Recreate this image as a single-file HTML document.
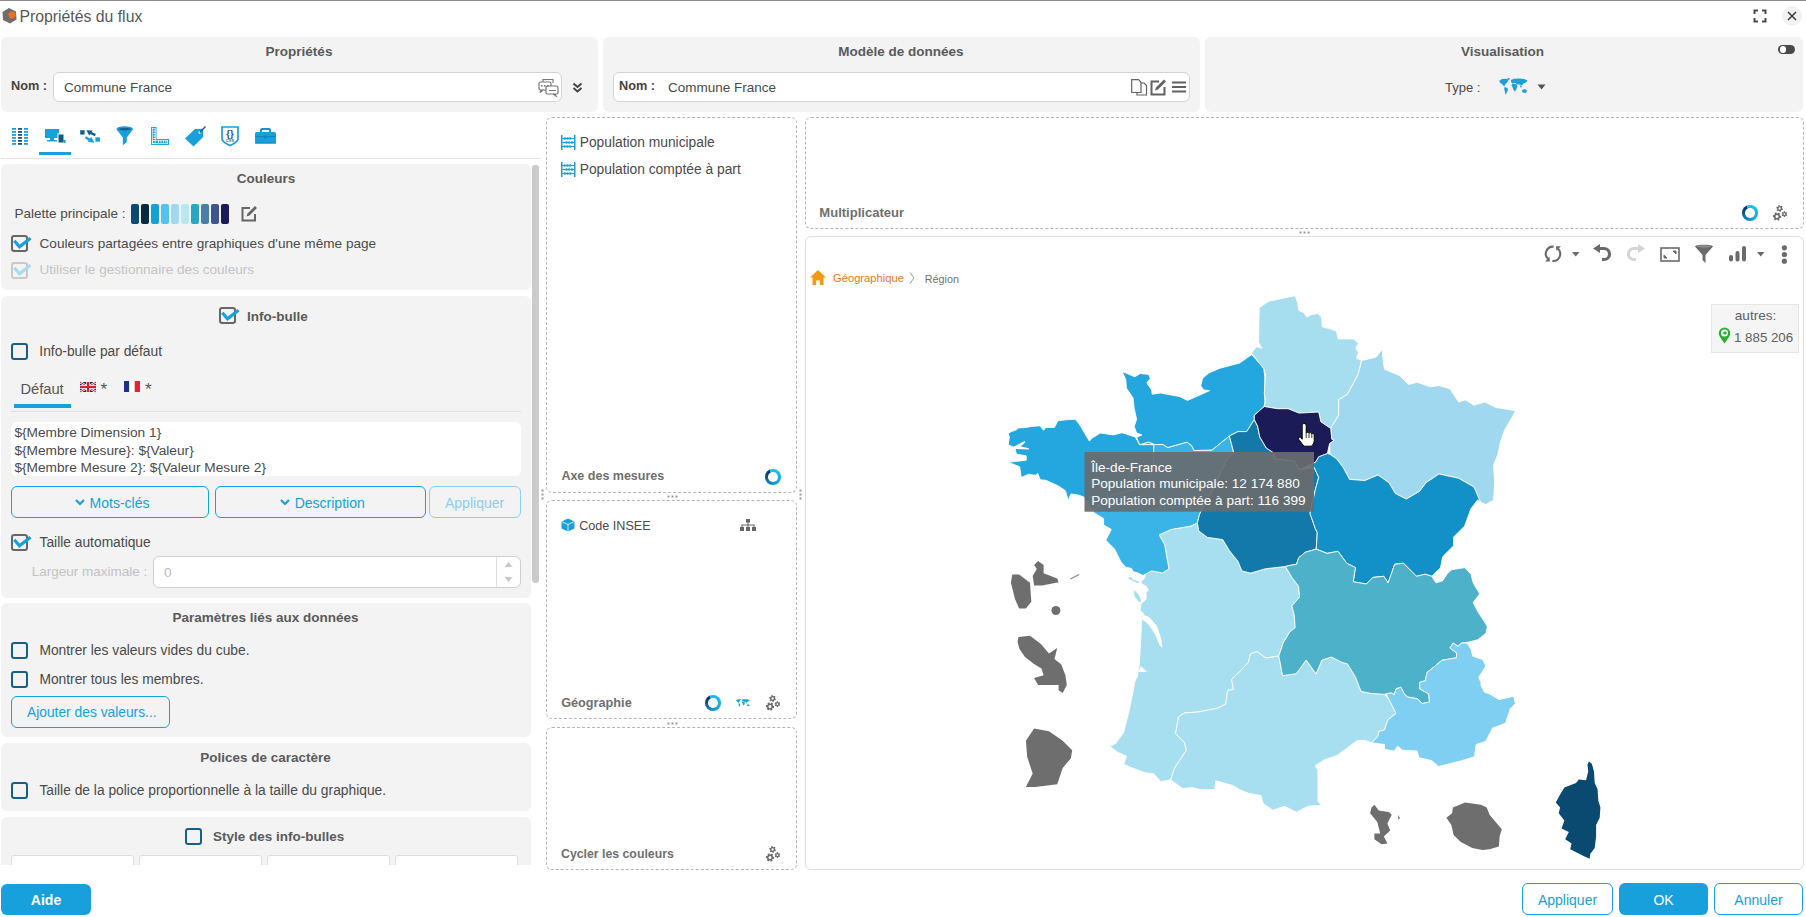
<!DOCTYPE html>
<html><head><meta charset="utf-8"><title>Propriétés du flux</title>
<style>
html,body{margin:0;padding:0;background:#fff;width:1806px;height:917px;overflow:hidden;position:relative}
.t{position:absolute;white-space:nowrap;line-height:1;font-family:"Liberation Sans",sans-serif}
.b{position:absolute}
svg.b{overflow:visible}
</style></head><body>
<div class="b" style="left:0px;top:0px;width:1806px;height:1px;background:#8c8c8c"></div>
<svg class="b" style="left:1px;top:7px" width="18" height="18" viewBox="0 0 18 18"><path d="M8 1 L15 4.5 L15.5 12.5 L9 16.5 L2 13 L1.5 5 Z" fill="#6d6d6d"/><circle cx="11" cy="8" r="3.6" fill="#f07020"/></svg>
<div class="t" style="left:19.4px;top:9.03px;font-size:15.8px;color:#585858;font-weight:normal;">Propriétés du flux</div>
<svg class="b" style="left:1753px;top:9px" width="14" height="14" viewBox="0 0 14 14"><path d="M1.5 5V1.5H5M9 1.5H12.5V5M12.5 9V12.5H9M5 12.5H1.5V9" fill="none" stroke="#4a4a4a" stroke-width="2"/></svg>
<div class="b" style="left:1782px;top:6px;width:20px;height:20px;background:#f2f2f2;border-radius:50%"></div>
<svg class="b" style="left:1787px;top:11px" width="10" height="10" viewBox="0 0 10 10"><path d="M1 1L9 9M9 1L1 9" stroke="#3a3a3a" stroke-width="1.5"/></svg>
<div class="b" style="left:1px;top:37px;width:597px;height:75px;background:#f3f3f3;border-radius:6px"></div>
<div class="b" style="left:603px;top:37px;width:597px;height:75px;background:#f3f3f3;border-radius:6px"></div>
<div class="b" style="left:1205px;top:37px;width:598px;height:75px;background:#f3f3f3;border-radius:6px"></div>
<div class="t" style="left:-1px;width:600px;text-align:center;top:44.57px;font-size:13.5px;color:#5a5a5a;font-weight:bold;">Propriétés</div>
<div class="t" style="left:601px;width:600px;text-align:center;top:44.57px;font-size:13.5px;color:#5a5a5a;font-weight:bold;">Modèle de données</div>
<div class="t" style="left:1202.5px;width:600px;text-align:center;top:44.97px;font-size:13.5px;color:#5a5a5a;font-weight:bold;">Visualisation</div>
<div class="t" style="left:11px;top:80.25px;font-size:12.7px;color:#444;font-weight:bold;">Nom :</div>
<div class="b" style="left:53px;top:72px;width:509px;height:30px;background:#fff;border:1px solid #cfd3d8;border-radius:6px;box-sizing:border-box"></div>
<div class="t" style="left:64px;top:80.87px;font-size:13.5px;color:#4a4a4a;font-weight:normal;">Commune France</div>
<svg class="b" style="left:538px;top:78px" width="22" height="18" viewBox="0 0 22 18"><g fill="none" stroke="#777" stroke-width="1.2"><rect x="1" y="4" width="12" height="8" rx="1.5"/><path d="M3 12l-1 2.5 3-2.5"/><path d="M5 4V1.5h10V5"/><rect x="8" y="8" width="12" height="8" rx="1.5" fill="#fff"/><path d="M17 16l1 2 -3-2"/></g><g fill="#777"><rect x="3" y="7" width="1.6" height="1.6"/><rect x="6" y="7" width="1.6" height="1.6"/><rect x="9" y="7" width="1.6" height="1.6"/><rect x="11" y="12" width="7" height="1"/></g></svg>
<svg class="b" style="left:572px;top:82px" width="11" height="11" viewBox="0 0 11 11"><path d="M1.5 1.5L5.5 5L9.5 1.5M1.5 6L5.5 9.5L9.5 6" fill="none" stroke="#444" stroke-width="2"/></svg>
<div class="b" style="left:613px;top:72px;width:577px;height:30px;background:#fff;border:1px solid #cfd3d8;border-radius:6px;box-sizing:border-box"></div>
<div class="t" style="left:619px;top:80.25px;font-size:12.7px;color:#444;font-weight:bold;">Nom :</div>
<div class="t" style="left:668px;top:80.87px;font-size:13.5px;color:#4a4a4a;font-weight:normal;">Commune France</div>
<svg class="b" style="left:1131px;top:79px" width="17" height="17" viewBox="0 0 17 17"><path d="M0.7 0.7H7.5L10 3.2V13.5H0.7Z" fill="none" stroke="#626262" stroke-width="1.2"/><path d="M6 13.5V16H15.5V6.5L13 4H10" fill="none" stroke="#626262" stroke-width="1.2"/></svg>
<svg class="b" style="left:1150px;top:78px" width="17" height="18" viewBox="0 0 17 18"><path d="M9 3.5H1.5V16.5H14.5V9" fill="none" stroke="#626262" stroke-width="2"/><path d="M14 1.5L16 3.5L8 11.5L5 12.5L6 9.5Z" fill="#626262"/></svg>
<svg class="b" style="left:1172px;top:81px" width="14" height="12" viewBox="0 0 14 12"><path d="M0 1.5H14M0 6H14M0 10.5H14" stroke="#626262" stroke-width="2"/></svg>
<div class="b" style="left:1778px;top:44.5px;width:17px;height:9.5px;background:#4a4a4a;border-radius:5px"></div>
<div class="b" style="left:1779.5px;top:46px;width:6.5px;height:6.5px;background:#fff;border-radius:50%"></div>
<div class="t" style="left:1445px;top:80.60px;font-size:13px;color:#4a4a4a;font-weight:normal;">Type :</div>
<svg class="b" style="left:1499px;top:78px" width="29" height="17" viewBox="0 0 29 17"><g fill="#1e9fd8"><path d="M0.5 2.5L3 1L7 0.8L9.5 1.5L9 3.5L7.5 5L6 7L5.2 8.5L3.5 6.5L1.5 5L0.5 4Z"/><path d="M8 0.3L11 0.3L10.5 1.8L8.8 1.8Z"/><path d="M5.5 9L8.5 10L9 12L7.5 15L6.5 17L6 14L5.2 11Z"/><path d="M12 2L15 0.8L20 0.5L25 1L28.5 2.5L27 4.5L24.5 5.5L23 7.5L20.5 6.5L18 6.5L16.5 5L13.5 5.5L12 4Z"/><path d="M13 6L17 6L18.5 8L17.5 11L16 13.5L14.5 12L13.5 9L12.5 7.5Z"/><path d="M20.5 7L23 8L22 10Z"/><path d="M23 12L26 11L28 12.5L27 15L23.5 14.5Z"/></g></svg>
<svg class="b" style="left:1537px;top:84px" width="9" height="6" viewBox="0 0 9 6"><path d="M0.5 0.5H8.5L4.5 5.5Z" fill="#555"/></svg>
<svg class="b" style="left:12px;top:128px" width="17" height="18" viewBox="0 0 17 18"><rect x="0" y="0" width="4" height="1.8" fill="#17a0db"/><rect x="6" y="0" width="4" height="1.8" fill="#16587e"/><rect x="12" y="0" width="4" height="1.8" fill="#17a0db"/><rect x="0" y="3" width="4" height="1.8" fill="#17a0db"/><rect x="6" y="3" width="4" height="1.8" fill="#16587e"/><rect x="12" y="3" width="4" height="1.8" fill="#17a0db"/><rect x="0" y="6" width="4" height="1.8" fill="#17a0db"/><rect x="6" y="6" width="4" height="1.8" fill="#16587e"/><rect x="12" y="6" width="4" height="1.8" fill="#17a0db"/><rect x="0" y="9" width="4" height="1.8" fill="#17a0db"/><rect x="6" y="9" width="4" height="1.8" fill="#16587e"/><rect x="12" y="9" width="4" height="1.8" fill="#17a0db"/><rect x="0" y="12" width="4" height="1.8" fill="#17a0db"/><rect x="6" y="12" width="4" height="1.8" fill="#16587e"/><rect x="12" y="12" width="4" height="1.8" fill="#17a0db"/><rect x="0" y="15" width="4" height="1.8" fill="#17a0db"/><rect x="6" y="15" width="4" height="1.8" fill="#16587e"/><rect x="12" y="15" width="4" height="1.8" fill="#17a0db"/></svg>
<svg class="b" style="left:45px;top:129px" width="21" height="14" viewBox="0 0 21 14"><rect x="0" y="0" width="14" height="9" fill="#17a0db"/><rect x="5" y="9" width="4" height="2" fill="#17a0db"/><rect x="2" y="11" width="10" height="1.5" fill="#17a0db"/><rect x="13" y="5" width="6" height="9" fill="#16587e" stroke="#fff" stroke-width="1"/><rect x="18.5" y="11" width="2" height="3" fill="#17a0db"/></svg>
<div class="b" style="left:39px;top:152px;width:32px;height:3px;background:#17a0db"></div>
<svg class="b" style="left:80px;top:129px" width="20" height="15" viewBox="0 0 20 15"><rect x="0.2" y="1.2" width="4.4" height="4.4" fill="#115f8c"/><path d="M10 3.6L15.4 6.2" stroke="#115f8c" stroke-width="2.4"/><path d="M6.4 1.2L12.6 1.4L9.2 6.5Z" fill="#115f8c"/><path d="M5.5 8.3L11 11.8" stroke="#17a0db" stroke-width="2.4"/><path d="M14.3 13.8L7.9 12.7L11.4 7.8Z" fill="#17a0db"/><rect x="15.4" y="8.3" width="4.5" height="4.4" fill="#17a0db"/></svg>
<svg class="b" style="left:116px;top:126px" width="18" height="20" viewBox="0 0 18 20"><ellipse cx="8.7" cy="3" rx="8.3" ry="2.8" fill="#17a0db"/><path d="M0.6 3.5L6.8 11.5L6.9 19.2L10.8 16L10.8 11.5L16.8 3.5Z" fill="#17a0db"/><ellipse cx="8.7" cy="3.2" rx="6" ry="1.2" fill="#115f8c"/></svg>
<svg class="b" style="left:151px;top:127px" width="18" height="18" viewBox="0 0 18 18"><path d="M0 0H5.5V12H18V18H0Z" fill="#17a0db"/><g fill="#fff"><rect x="1.3" y="1.3" width="2.9" height="15.4" fill="none" stroke="#fff" stroke-width="0.7"/><rect x="1.3" y="13.3" width="15.4" height="3.4" fill="none" stroke="#fff" stroke-width="0.7"/><rect x="2.5" y="3.5" width="2" height="1"/><rect x="2.5" y="6" width="2" height="1"/><rect x="2.5" y="8.5" width="2" height="1"/><rect x="2.5" y="11" width="2" height="1"/><rect x="7" y="13.5" width="1" height="2"/><rect x="9.5" y="13.5" width="1" height="2"/><rect x="12" y="13.5" width="1" height="2"/><rect x="14.5" y="13.5" width="1" height="2"/></g></svg>
<svg class="b" style="left:185px;top:126px" width="21" height="20" viewBox="0 0 21 20"><path d="M10 3L18 2.8L18.2 11L8.5 20.5L0 12.5Z" fill="#17a0db"/><circle cx="14.8" cy="6.5" r="1.4" fill="#cfeaf6"/><path d="M14.8 6.5L20.5 0.5" stroke="#16587e" stroke-width="1.3"/></svg>
<svg class="b" style="left:221px;top:126px" width="18" height="20" viewBox="0 0 18 20"><path d="M1 1H17V13C17 16 12 18 9 19.5C6 18 1 16 1 13Z" fill="#fff" stroke="#17a0db" stroke-width="1.7"/><text x="9" y="11" font-size="9.5" font-weight="bold" text-anchor="middle" fill="#16587e" font-family="Liberation Sans">{}</text><text x="9" y="16.3" font-size="5.5" text-anchor="middle" fill="#16587e" font-family="Liberation Sans">css</text></svg>
<svg class="b" style="left:255px;top:128px" width="21" height="16" viewBox="0 0 21 16"><path d="M6 4.5V2.2Q6 1 7.3 1H13.7Q15 1 15 2.2V4.5" fill="none" stroke="#1791c9" stroke-width="2"/><rect x="0" y="4" width="21" height="11.5" rx="1.5" fill="#17a0db"/><rect x="0" y="8" width="21" height="1" fill="#1586bd"/><rect x="0" y="14.5" width="21" height="1" fill="#1586bd"/><circle cx="10.5" cy="9" r="1.8" fill="#1586bd"/></svg>
<div class="b" style="left:1px;top:158px;width:540px;height:1px;background:#e4e4e4"></div>
<div class="b" style="left:1px;top:164px;width:530px;height:126px;background:#f3f3f3;border-radius:6px"></div>
<div class="b" style="left:1px;top:296px;width:530px;height:302px;background:#f3f3f3;border-radius:6px"></div>
<div class="b" style="left:1px;top:603px;width:530px;height:134px;background:#f3f3f3;border-radius:6px"></div>
<div class="b" style="left:1px;top:743px;width:530px;height:68px;background:#f3f3f3;border-radius:6px"></div>
<div class="b" style="left:1px;top:817px;width:530px;height:48px;overflow:hidden"><div style="position:absolute;left:0;top:0;width:530px;height:60px;background:#f3f3f3;border-radius:6px"></div></div>
<div class="b" style="left:532px;top:165px;width:6.5px;height:418px;background:#cbcbcb;border-radius:3px"></div>
<div class="t" style="left:-34px;width:600px;text-align:center;top:171.57px;font-size:13.5px;color:#5a5a5a;font-weight:bold;">Couleurs</div>
<div class="t" style="left:14.5px;top:207.17px;font-size:13.5px;color:#4a4a4a;font-weight:normal;">Palette principale :</div>
<div class="b" style="left:131px;top:204px;width:8px;height:20px;background:#0b4a72;border-radius:2px"></div>
<div class="b" style="left:141px;top:204px;width:8px;height:20px;background:#072a40;border-radius:2px"></div>
<div class="b" style="left:151px;top:204px;width:8px;height:20px;background:#14a0d8;border-radius:2px"></div>
<div class="b" style="left:161px;top:204px;width:8px;height:20px;background:#50c4ef;border-radius:2px"></div>
<div class="b" style="left:171px;top:204px;width:8px;height:20px;background:#9fd8ef;border-radius:2px"></div>
<div class="b" style="left:181px;top:204px;width:8px;height:20px;background:#b8e9f0;border-radius:2px"></div>
<div class="b" style="left:191px;top:204px;width:8px;height:20px;background:#2aa6c0;border-radius:2px"></div>
<div class="b" style="left:201px;top:204px;width:8px;height:20px;background:#4a7ea8;border-radius:2px"></div>
<div class="b" style="left:211px;top:204px;width:8px;height:20px;background:#3e5591;border-radius:2px"></div>
<div class="b" style="left:221px;top:204px;width:8px;height:20px;background:#1b1b5c;border-radius:2px"></div>
<svg class="b" style="left:241px;top:205px" width="17" height="17" viewBox="0 0 17 17"><path d="M9 3H1.5V15.5H14V9" fill="none" stroke="#666" stroke-width="2"/><path d="M14 1L16 3L8.5 10.5L5.5 11.5L6.5 8.5Z" fill="#666"/></svg>
<svg class="b" style="left:11px;top:235px" width="21" height="17" viewBox="0 0 21 17"><rect x="1" y="1" width="15" height="15" rx="2.2" fill="none" stroke="#666" stroke-width="2"/><path d="M3.3 5.8L8.5 11.8L19.5 3.2" fill="none" stroke="#17a0db" stroke-width="3.2"/></svg>
<div class="t" style="left:39.5px;top:237.09px;font-size:13.6px;color:#4a4a4a;font-weight:normal;">Couleurs partagées entre graphiques d'une même page</div>
<svg class="b" style="left:11px;top:261.5px" width="21" height="17" viewBox="0 0 21 17"><rect x="1" y="1" width="15" height="15" rx="2.2" fill="none" stroke="#c9c9c9" stroke-width="2"/><path d="M3.3 5.8L8.5 11.8L19.5 3.2" fill="none" stroke="#a9daf0" stroke-width="3.2"/></svg>
<div class="t" style="left:39.5px;top:263.29px;font-size:13.6px;color:#c4c4c4;font-weight:normal;">Utiliser le gestionnaire des couleurs</div>
<svg class="b" style="left:219px;top:307px" width="21" height="17" viewBox="0 0 21 17"><rect x="1" y="1" width="15" height="15" rx="2.2" fill="none" stroke="#666" stroke-width="2"/><path d="M3.3 5.8L8.5 11.8L19.5 3.2" fill="none" stroke="#17a0db" stroke-width="3.2"/></svg>
<div class="t" style="left:247px;top:309.57px;font-size:13.5px;color:#5a5a5a;font-weight:bold;">Info-bulle</div>
<svg class="b" style="left:11px;top:343px" width="17" height="17" viewBox="0 0 17 17"><rect x="1" y="1" width="15" height="15" rx="2.2" fill="none" stroke="#175f86" stroke-width="2"/></svg>
<div class="t" style="left:39.3px;top:345.32px;font-size:13.8px;color:#4a4a4a;font-weight:normal;">Info-bulle par défaut</div>
<div class="t" style="left:20.4px;top:382.16px;font-size:14.7px;color:#555;font-weight:normal;">Défaut</div>
<div class="b" style="left:14px;top:404px;width:57px;height:3.5px;background:#17a0db"></div>
<div class="b" style="left:11px;top:411px;width:510px;height:1px;background:#e0e0e0"></div>
<svg class="b" style="left:80px;top:382px" width="16" height="10" viewBox="0 0 16 10"><rect width="16" height="10" fill="#1d2b6b"/><path d="M0 0L16 10M16 0L0 10" stroke="#fff" stroke-width="2.4"/><path d="M0 0L16 10M16 0L0 10" stroke="#d22030" stroke-width="1"/><path d="M8 0V10M0 5H16" stroke="#fff" stroke-width="3.4"/><path d="M8 0V10M0 5H16" stroke="#d22030" stroke-width="2"/></svg>
<div class="t" style="left:100.5px;top:381.11px;font-size:17px;color:#555;font-weight:normal;">*</div>
<svg class="b" style="left:124px;top:381px" width="16" height="11" viewBox="0 0 16 11"><rect width="5.3" height="11" fill="#1f2d8c"/><rect x="5.3" width="5.4" height="11" fill="#fff"/><rect x="10.7" width="5.3" height="11" fill="#e0263a"/></svg>
<div class="t" style="left:145px;top:381.11px;font-size:17px;color:#555;font-weight:normal;">*</div>
<div class="b" style="left:11px;top:422px;width:510px;height:54px;background:#fff;border-radius:6px"></div>
<div class="t" style="left:14.4px;top:425.50px;font-size:13.7px;color:#4a4a4a;font-weight:normal;">${Membre Dimension 1}</div>
<div class="t" style="left:14.4px;top:443.50px;font-size:13.7px;color:#4a4a4a;font-weight:normal;">${Membre Mesure}: ${Valeur}</div>
<div class="t" style="left:14.4px;top:461.00px;font-size:13.7px;color:#4a4a4a;font-weight:normal;">${Membre Mesure 2}: ${Valeur Mesure 2}</div>
<div class="b" style="left:11px;top:486px;width:198px;height:32px;border:1.3px solid #17a0db;border-radius:6px;box-sizing:border-box"></div>
<div class="t" style="left:89.6px;top:495.65px;font-size:14px;color:#17a0db;font-weight:normal;">Mots-clés</div>
<svg class="b" style="left:75px;top:499px" width="10" height="7" viewBox="0 0 10 7"><path d="M1 1L5 5L9 1" fill="none" stroke="#17a0db" stroke-width="2.2"/></svg>
<div class="b" style="left:215px;top:486px;width:211px;height:32px;border:1.3px solid #17a0db;border-radius:6px;box-sizing:border-box"></div>
<div class="t" style="left:294.7px;top:495.65px;font-size:14px;color:#17a0db;font-weight:normal;">Description</div>
<svg class="b" style="left:280px;top:499px" width="10" height="7" viewBox="0 0 10 7"><path d="M1 1L5 5L9 1" fill="none" stroke="#17a0db" stroke-width="2.2"/></svg>
<div class="b" style="left:429px;top:486px;width:92px;height:32px;border:1.3px solid #8fcdea;border-radius:6px;box-sizing:border-box"></div>
<div class="t" style="left:445px;top:495.65px;font-size:14px;color:#8fcdea;font-weight:normal;">Appliquer</div>
<svg class="b" style="left:11px;top:534px" width="21" height="17" viewBox="0 0 21 17"><rect x="1" y="1" width="15" height="15" rx="2.2" fill="none" stroke="#666" stroke-width="2"/><path d="M3.3 5.8L8.5 11.8L19.5 3.2" fill="none" stroke="#17a0db" stroke-width="3.2"/></svg>
<div class="t" style="left:39.5px;top:535.82px;font-size:13.8px;color:#4a4a4a;font-weight:normal;">Taille automatique</div>
<div class="t" style="left:31.8px;top:565.07px;font-size:13.5px;color:#c2c2c2;font-weight:normal;">Largeur maximale :</div>
<div class="b" style="left:153px;top:556px;width:368px;height:32px;background:#fff;border:1px solid #cfcfcf;border-radius:6px;box-sizing:border-box"></div>
<div class="b" style="left:496px;top:557px;width:1px;height:30px;background:#ddd"></div>
<svg class="b" style="left:504px;top:561px" width="9" height="22" viewBox="0 0 9 22"><path d="M0.5 6H8.5L4.5 1Z" fill="#c8c8c8"/><path d="M0.5 16H8.5L4.5 21Z" fill="#c8c8c8"/></svg>
<div class="t" style="left:164px;top:566.37px;font-size:13.5px;color:#bbb;font-weight:normal;">0</div>
<div class="t" style="left:-34.5px;width:600px;text-align:center;top:610.57px;font-size:13.5px;color:#5a5a5a;font-weight:bold;">Paramètres liés aux données</div>
<svg class="b" style="left:11px;top:642px" width="17" height="17" viewBox="0 0 17 17"><rect x="1" y="1" width="15" height="15" rx="2.2" fill="none" stroke="#175f86" stroke-width="2"/></svg>
<div class="t" style="left:39.4px;top:644.12px;font-size:13.8px;color:#4a4a4a;font-weight:normal;">Montrer les valeurs vides du cube.</div>
<svg class="b" style="left:11px;top:671px" width="17" height="17" viewBox="0 0 17 17"><rect x="1" y="1" width="15" height="15" rx="2.2" fill="none" stroke="#175f86" stroke-width="2"/></svg>
<div class="t" style="left:39.4px;top:673.32px;font-size:13.8px;color:#4a4a4a;font-weight:normal;">Montrer tous les membres.</div>
<div class="b" style="left:11px;top:696px;width:159px;height:32px;border:1.3px solid #17a0db;border-radius:6px;box-sizing:border-box"></div>
<div class="t" style="left:27px;top:705.82px;font-size:13.8px;color:#17a0db;font-weight:normal;">Ajouter des valeurs...</div>
<div class="t" style="left:-34.5px;width:600px;text-align:center;top:750.57px;font-size:13.5px;color:#5a5a5a;font-weight:bold;">Polices de caractère</div>
<svg class="b" style="left:11px;top:782px" width="17" height="17" viewBox="0 0 17 17"><rect x="1" y="1" width="15" height="15" rx="2.2" fill="none" stroke="#175f86" stroke-width="2"/></svg>
<div class="t" style="left:39.4px;top:783.92px;font-size:13.8px;color:#4a4a4a;font-weight:normal;">Taille de la police proportionnelle à la taille du graphique.</div>
<svg class="b" style="left:185px;top:828px" width="17" height="17" viewBox="0 0 17 17"><rect x="1" y="1" width="15" height="15" rx="2.2" fill="none" stroke="#175f86" stroke-width="2"/></svg>
<div class="t" style="left:213px;top:829.57px;font-size:13.5px;color:#5a5a5a;font-weight:bold;">Style des info-bulles</div>
<div class="b" style="left:0;top:855px;width:531px;height:10px;overflow:hidden"><div style="position:absolute;left:11px;top:0;width:123px;height:30px;background:#fff;border:1px solid #ddd;border-radius:3px;box-sizing:border-box"></div><div style="position:absolute;left:139px;top:0;width:123px;height:30px;background:#fff;border:1px solid #ddd;border-radius:3px;box-sizing:border-box"></div><div style="position:absolute;left:267px;top:0;width:123px;height:30px;background:#fff;border:1px solid #ddd;border-radius:3px;box-sizing:border-box"></div><div style="position:absolute;left:395px;top:0;width:123px;height:30px;background:#fff;border:1px solid #ddd;border-radius:3px;box-sizing:border-box"></div></div>
<div class="b" style="left:1px;top:883.5px;width:90px;height:31.5px;background:#17a0db;border-radius:6px"></div>
<div class="t" style="left:-254px;width:600px;text-align:center;top:892.55px;font-size:14px;color:#fff;font-weight:bold;">Aide</div>
<div class="b" style="left:546px;top:117px;width:251px;height:376px;border:1px dashed #b4b4b4;border-radius:6px;box-sizing:border-box"></div>
<div class="b" style="left:546px;top:500px;width:251px;height:219px;border:1px dashed #b4b4b4;border-radius:6px;box-sizing:border-box"></div>
<div class="b" style="left:546px;top:726.5px;width:251px;height:143px;border:1px dashed #b4b4b4;border-radius:6px;box-sizing:border-box"></div>
<svg class="b" style="left:561px;top:134.5px" width="15" height="15" viewBox="0 0 15 15"><g fill="#17a0db"><rect x="0" y="0" width="1.5" height="15"/><rect x="13" y="0" width="1.5" height="15"/><rect x="1" y="3" width="12" height="1"/><rect x="1" y="7" width="12" height="1"/><rect x="1" y="11" width="12" height="1"/><circle cx="3.8" cy="3.5" r="1.3"/><circle cx="6.5" cy="3.5" r="1.3"/><circle cx="9.2" cy="3.5" r="1.3"/><circle cx="5.5" cy="7.5" r="1.3"/><circle cx="8.2" cy="7.5" r="1.3"/><circle cx="10.9" cy="7.5" r="1.3"/><circle cx="3.8" cy="11.5" r="1.3"/><circle cx="6.5" cy="11.5" r="1.3"/><circle cx="9.2" cy="11.5" r="1.3"/></g></svg>
<svg class="b" style="left:561px;top:161.5px" width="15" height="15" viewBox="0 0 15 15"><g fill="#17a0db"><rect x="0" y="0" width="1.5" height="15"/><rect x="13" y="0" width="1.5" height="15"/><rect x="1" y="3" width="12" height="1"/><rect x="1" y="7" width="12" height="1"/><rect x="1" y="11" width="12" height="1"/><circle cx="3.8" cy="3.5" r="1.3"/><circle cx="6.5" cy="3.5" r="1.3"/><circle cx="9.2" cy="3.5" r="1.3"/><circle cx="5.5" cy="7.5" r="1.3"/><circle cx="8.2" cy="7.5" r="1.3"/><circle cx="10.9" cy="7.5" r="1.3"/><circle cx="3.8" cy="11.5" r="1.3"/><circle cx="6.5" cy="11.5" r="1.3"/><circle cx="9.2" cy="11.5" r="1.3"/></g></svg>
<div class="t" style="left:579.7px;top:136.12px;font-size:13.8px;color:#4a4a4a;font-weight:normal;">Population municipale</div>
<div class="t" style="left:579.7px;top:163.12px;font-size:13.8px;color:#4a4a4a;font-weight:normal;">Population comptée à part</div>
<div class="t" style="left:561.4px;top:470.42px;font-size:12.5px;color:#6f6f6f;font-weight:bold;">Axe des mesures</div>
<div class="b" style="left:765.2px;top:469.2px;width:15.6px;height:15.6px;border-radius:50%;background:conic-gradient(from -25deg,#06c8f2 0deg,#18b4e8 120deg,#1597d2 200deg,#0c6ea8 270deg,#06386a 335deg)"><div style="position:absolute;left:3px;top:3px;width:9.6px;height:9.6px;border-radius:50%;background:#fff"></div></div>
<svg class="b" style="left:667px;top:495px" width="11" height="3" viewBox="0 0 11 3"><rect x="0.5" y="0.5" width="2" height="2" fill="#999"/><rect x="4.5" y="0.5" width="2" height="2" fill="#999"/><rect x="8.5" y="0.5" width="2" height="2" fill="#999"/></svg>
<svg class="b" style="left:667px;top:721.5px" width="11" height="3" viewBox="0 0 11 3"><rect x="0.5" y="0.5" width="2" height="2" fill="#999"/><rect x="4.5" y="0.5" width="2" height="2" fill="#999"/><rect x="8.5" y="0.5" width="2" height="2" fill="#999"/></svg>
<svg class="b" style="left:1299px;top:231px" width="11" height="3" viewBox="0 0 11 3"><rect x="0.5" y="0.5" width="2" height="2" fill="#999"/><rect x="4.5" y="0.5" width="2" height="2" fill="#999"/><rect x="8.5" y="0.5" width="2" height="2" fill="#999"/></svg>
<svg class="b" style="left:541px;top:489px" width="3" height="11" viewBox="0 0 3 11"><rect x="0.5" y="0.5" width="2" height="2" fill="#999"/><rect x="0.5" y="4.5" width="2" height="2" fill="#999"/><rect x="0.5" y="8.5" width="2" height="2" fill="#999"/></svg>
<svg class="b" style="left:799px;top:489px" width="3" height="11" viewBox="0 0 3 11"><rect x="0.5" y="0.5" width="2" height="2" fill="#999"/><rect x="0.5" y="4.5" width="2" height="2" fill="#999"/><rect x="0.5" y="8.5" width="2" height="2" fill="#999"/></svg>
<svg class="b" style="left:561px;top:518px" width="14" height="14" viewBox="0 0 14 14"><path d="M7 0.5L13.5 3.5V10.5L7 13.5L0.5 10.5V3.5Z" fill="#17a0db"/><path d="M0.5 3.5L7 6.5L13.5 3.5M7 6.5V13.5" fill="none" stroke="#fff" stroke-width="0.8"/></svg>
<div class="t" style="left:579.2px;top:520.13px;font-size:12.6px;color:#4a4a4a;font-weight:normal;">Code INSEE</div>
<svg class="b" style="left:740px;top:519px" width="16" height="12" viewBox="0 0 16 12"><g fill="#666"><rect x="6" y="0" width="4" height="3.5"/><rect x="0" y="8" width="4" height="4"/><rect x="6" y="8" width="4" height="4"/><rect x="12" y="8" width="4" height="4"/><rect x="7.5" y="3" width="1" height="5"/><rect x="2" y="5.5" width="12" height="1"/><rect x="1.5" y="5.5" width="1" height="3"/><rect x="13.5" y="5.5" width="1" height="3"/></g></svg>
<div class="t" style="left:561.2px;top:696.55px;font-size:12.7px;color:#6f6f6f;font-weight:bold;">Géographie</div>
<div class="b" style="left:705.2px;top:695.2px;width:15.6px;height:15.6px;border-radius:50%;background:conic-gradient(from -25deg,#06c8f2 0deg,#18b4e8 120deg,#1597d2 200deg,#0c6ea8 270deg,#06386a 335deg)"><div style="position:absolute;left:3px;top:3px;width:9.6px;height:9.6px;border-radius:50%;background:#fff"></div></div>
<svg class="b" style="left:736px;top:698px" width="14" height="10" viewBox="0 0 29 17"><g fill="#1e9fd8"><path d="M0.5 2.5L3 1L7 0.8L9.5 1.5L9 3.5L7.5 5L6 7L5.2 8.5L3.5 6.5L1.5 5L0.5 4Z"/><path d="M8 0.3L11 0.3L10.5 1.8L8.8 1.8Z"/><path d="M5.5 9L8.5 10L9 12L7.5 15L6.5 17L6 14L5.2 11Z"/><path d="M12 2L15 0.8L20 0.5L25 1L28.5 2.5L27 4.5L24.5 5.5L23 7.5L20.5 6.5L18 6.5L16.5 5L13.5 5.5L12 4Z"/><path d="M13 6L17 6L18.5 8L17.5 11L16 13.5L14.5 12L13.5 9L12.5 7.5Z"/><path d="M20.5 7L23 8L22 10Z"/><path d="M23 12L26 11L28 12.5L27 15L23.5 14.5Z"/></g></svg>
<svg class="b" style="left:765px;top:694px" width="16" height="16" viewBox="0 0 16 16"><path d="M10.99 4.72L10.52 6.24L9.63 5.96L8.90 6.63L9.11 7.55L7.56 7.90L7.35 6.99L6.40 6.70L5.71 7.33L4.64 6.16L5.32 5.53L5.10 4.56L4.21 4.28L4.68 2.76L5.57 3.04L6.30 2.37L6.09 1.45L7.64 1.10L7.85 2.01L8.80 2.30L9.49 1.67L10.56 2.84L9.88 3.47L10.10 4.44ZM8.75 4.50A1.15 1.15 0 1 0 6.45 4.50A1.15 1.15 0 1 0 8.75 4.50Z" fill="#6a6a6a" fill-rule="evenodd"/><path d="M9.16 11.93L8.97 13.88L7.82 13.78L7.11 14.77L7.57 15.82L5.78 16.63L5.31 15.58L4.09 15.46L3.41 16.39L1.82 15.24L2.48 14.31L1.98 13.19L0.84 13.07L1.03 11.12L2.18 11.22L2.89 10.23L2.43 9.18L4.22 8.37L4.69 9.42L5.91 9.54L6.59 8.61L8.18 9.76L7.52 10.69L8.02 11.81ZM6.50 12.50A1.5 1.5 0 1 0 3.50 12.50A1.5 1.5 0 1 0 6.50 12.50Z" fill="#6a6a6a" fill-rule="evenodd"/><path d="M15.20 10.86L14.55 12.05L13.83 11.64L13.12 12.07L13.14 12.90L11.79 12.94L11.78 12.11L11.05 11.71L10.34 12.15L9.64 10.99L10.35 10.56L10.33 9.73L9.60 9.34L10.25 8.15L10.97 8.56L11.68 8.13L11.66 7.30L13.01 7.26L13.02 8.09L13.75 8.49L14.46 8.05L15.16 9.21L14.45 9.64L14.47 10.47ZM13.35 10.10A0.95 0.95 0 1 0 11.45 10.10A0.95 0.95 0 1 0 13.35 10.10Z" fill="#6a6a6a" fill-rule="evenodd"/></svg>
<div class="t" style="left:561px;top:847.99px;font-size:12.3px;color:#6f6f6f;font-weight:bold;">Cycler les couleurs</div>
<svg class="b" style="left:765px;top:845px" width="16" height="16" viewBox="0 0 16 16"><path d="M10.99 4.72L10.52 6.24L9.63 5.96L8.90 6.63L9.11 7.55L7.56 7.90L7.35 6.99L6.40 6.70L5.71 7.33L4.64 6.16L5.32 5.53L5.10 4.56L4.21 4.28L4.68 2.76L5.57 3.04L6.30 2.37L6.09 1.45L7.64 1.10L7.85 2.01L8.80 2.30L9.49 1.67L10.56 2.84L9.88 3.47L10.10 4.44ZM8.75 4.50A1.15 1.15 0 1 0 6.45 4.50A1.15 1.15 0 1 0 8.75 4.50Z" fill="#6a6a6a" fill-rule="evenodd"/><path d="M9.16 11.93L8.97 13.88L7.82 13.78L7.11 14.77L7.57 15.82L5.78 16.63L5.31 15.58L4.09 15.46L3.41 16.39L1.82 15.24L2.48 14.31L1.98 13.19L0.84 13.07L1.03 11.12L2.18 11.22L2.89 10.23L2.43 9.18L4.22 8.37L4.69 9.42L5.91 9.54L6.59 8.61L8.18 9.76L7.52 10.69L8.02 11.81ZM6.50 12.50A1.5 1.5 0 1 0 3.50 12.50A1.5 1.5 0 1 0 6.50 12.50Z" fill="#6a6a6a" fill-rule="evenodd"/><path d="M15.20 10.86L14.55 12.05L13.83 11.64L13.12 12.07L13.14 12.90L11.79 12.94L11.78 12.11L11.05 11.71L10.34 12.15L9.64 10.99L10.35 10.56L10.33 9.73L9.60 9.34L10.25 8.15L10.97 8.56L11.68 8.13L11.66 7.30L13.01 7.26L13.02 8.09L13.75 8.49L14.46 8.05L15.16 9.21L14.45 9.64L14.47 10.47ZM13.35 10.10A0.95 0.95 0 1 0 11.45 10.10A0.95 0.95 0 1 0 13.35 10.10Z" fill="#6a6a6a" fill-rule="evenodd"/></svg>
<div class="b" style="left:804.5px;top:117px;width:999px;height:112px;border:1px dashed #b4b4b4;border-radius:6px;box-sizing:border-box"></div>
<div class="t" style="left:819.3px;top:206.35px;font-size:13.05px;color:#6f6f6f;font-weight:bold;">Multiplicateur</div>
<div class="b" style="left:1742.2px;top:205.2px;width:15.6px;height:15.6px;border-radius:50%;background:conic-gradient(from -25deg,#06c8f2 0deg,#18b4e8 120deg,#1597d2 200deg,#0c6ea8 270deg,#06386a 335deg)"><div style="position:absolute;left:3px;top:3px;width:9.6px;height:9.6px;border-radius:50%;background:#fff"></div></div>
<svg class="b" style="left:1772px;top:204px" width="16" height="16" viewBox="0 0 16 16"><path d="M10.99 4.72L10.52 6.24L9.63 5.96L8.90 6.63L9.11 7.55L7.56 7.90L7.35 6.99L6.40 6.70L5.71 7.33L4.64 6.16L5.32 5.53L5.10 4.56L4.21 4.28L4.68 2.76L5.57 3.04L6.30 2.37L6.09 1.45L7.64 1.10L7.85 2.01L8.80 2.30L9.49 1.67L10.56 2.84L9.88 3.47L10.10 4.44ZM8.75 4.50A1.15 1.15 0 1 0 6.45 4.50A1.15 1.15 0 1 0 8.75 4.50Z" fill="#6a6a6a" fill-rule="evenodd"/><path d="M9.16 11.93L8.97 13.88L7.82 13.78L7.11 14.77L7.57 15.82L5.78 16.63L5.31 15.58L4.09 15.46L3.41 16.39L1.82 15.24L2.48 14.31L1.98 13.19L0.84 13.07L1.03 11.12L2.18 11.22L2.89 10.23L2.43 9.18L4.22 8.37L4.69 9.42L5.91 9.54L6.59 8.61L8.18 9.76L7.52 10.69L8.02 11.81ZM6.50 12.50A1.5 1.5 0 1 0 3.50 12.50A1.5 1.5 0 1 0 6.50 12.50Z" fill="#6a6a6a" fill-rule="evenodd"/><path d="M15.20 10.86L14.55 12.05L13.83 11.64L13.12 12.07L13.14 12.90L11.79 12.94L11.78 12.11L11.05 11.71L10.34 12.15L9.64 10.99L10.35 10.56L10.33 9.73L9.60 9.34L10.25 8.15L10.97 8.56L11.68 8.13L11.66 7.30L13.01 7.26L13.02 8.09L13.75 8.49L14.46 8.05L15.16 9.21L14.45 9.64L14.47 10.47ZM13.35 10.10A0.95 0.95 0 1 0 11.45 10.10A0.95 0.95 0 1 0 13.35 10.10Z" fill="#6a6a6a" fill-rule="evenodd"/></svg>
<div class="b" style="left:804.5px;top:236px;width:999px;height:634px;border:1px solid #dedede;border-radius:6px;box-sizing:border-box"></div>
<svg class="b" style="left:0;top:0" width="1806" height="917" viewBox="0 0 1806 917"><polygon points="1142.9,575.2 1151.6,570.9 1162.5,573.0 1169.0,568.7 1166.9,557.8 1164.7,544.7 1159.2,534.9 1171.2,529.4 1190.9,526.1 1197.4,522.9 1198.7,530.9 1207.4,537.4 1222.7,539.6 1229.3,550.5 1238.0,561.4 1241.8,570.9 1250.5,573.1 1265.8,568.7 1285.4,566.5 1291.9,577.4 1298.5,586.2 1299.6,597.1 1291.9,605.8 1294.1,614.5 1295.2,627.6 1289.7,632.0 1283.2,642.9 1278.8,656.0 1265.8,658.1 1257.0,651.6 1250.5,653.8 1248.3,662.5 1239.4,671.8 1231.6,679.6 1233.5,689.5 1227.6,690.4 1225.7,704.2 1217.8,708.1 1198.2,712.0 1184.4,713.0 1178.5,716.9 1175.6,733.6 1184.4,742.5 1186.4,750.3 1174.6,768.0 1170.7,779.8 1160.9,781.7 1154.0,773.9 1146.1,772.9 1129.5,767.0 1123.6,764.1 1126.5,756.2 1117.7,752.3 1109.8,746.4 1115.7,743.4 1123.6,732.6 1129.5,709.1 1135.3,679.6 1137.1,677.8 1139.3,664.7 1141.4,625.4 1141.4,616.0 1144.0,614.3 1140.1,610.4 1140.8,603.8 1143.4,601.9 1146.3,598.6 1146.0,592.7 1148.3,590.1 1146.0,586.2 1142.1,584.2 1140.8,581.6 1144.0,579.0 1145.3,575.7" fill="#a8dff0" stroke="#fff" stroke-width="0.9" stroke-linejoin="round"/><polygon points="1170.7,779.8 1174.6,768.0 1186.4,750.3 1184.4,742.5 1175.6,733.6 1178.5,716.9 1184.4,713.0 1198.2,712.0 1217.8,708.1 1225.7,704.2 1227.6,690.4 1233.5,689.5 1231.6,679.6 1239.4,671.8 1248.3,662.5 1250.5,653.8 1257.0,651.6 1265.8,658.1 1278.8,656.0 1282.6,675.7 1296.3,673.7 1306.2,660.0 1316.0,674.0 1322.0,660.0 1331.4,657.0 1342.3,662.5 1347.4,663.9 1355.3,676.7 1361.1,691.4 1371.0,693.4 1384.7,694.4 1389.4,700.3 1396.0,713.4 1387.8,719.9 1384.5,729.8 1378.8,731.4 1378.0,736.3 1371.4,742.8 1365.1,740.5 1357.2,740.5 1337.6,755.2 1323.8,760.1 1315.0,766.0 1317.9,770.0 1317.9,801.4 1321.9,805.3 1308.1,806.3 1296.3,812.2 1284.6,806.3 1272.8,810.2 1263.0,803.3 1261.0,795.5 1249.2,793.5 1239.4,789.6 1233.5,785.7 1215.8,780.8 1214.9,789.6 1200.1,789.6 1192.3,787.6 1182.5,788.6" fill="#a8dff0" stroke="#fff" stroke-width="0.9" stroke-linejoin="round"/><polygon points="1139.6,444.7 1148.6,442.1 1154.6,444.5 1163.0,444.5 1167.8,447.5 1187.0,442.1 1191.7,445.7 1194.1,450.5 1212.0,450.0 1229.3,436.0 1231.4,443.6 1233.6,452.3 1225.8,461.8 1212.7,490.2 1201.8,509.8 1199.6,514.2 1197.4,522.9 1190.9,526.1 1171.2,529.4 1159.2,534.9 1164.7,544.7 1166.9,557.8 1169.0,568.7 1162.5,573.0 1151.6,570.9 1142.9,575.5 1138.1,573.1 1132.9,571.5 1131.6,568.5 1125.7,567.2 1121.1,562.1 1114.5,549.0 1105.8,540.3 1111.3,529.4 1103.6,525.0 1103.6,518.5 1092.7,512.0 1112.0,494.5 1132.0,490.0 1145.0,485.0 1153.0,470.0 1153.8,444.7" fill="#3ab3e6" stroke="#fff" stroke-width="0.9" stroke-linejoin="round"/><polygon points="1008.2,433.4 1010.9,431.8 1016.9,429.6 1018.0,428.0 1026.2,427.4 1031.6,426.4 1039.8,425.8 1043.6,430.2 1045.8,427.4 1054.5,427.4 1057.8,420.9 1065.4,419.8 1075.2,419.3 1078.5,423.1 1080.7,426.4 1085.1,434.0 1089.4,441.1 1091.6,438.4 1100.3,433.0 1113.4,434.9 1122.1,432.7 1135.2,437.0 1139.6,444.7 1153.8,444.7 1153.0,470.0 1145.0,485.0 1132.0,490.0 1112.0,494.5 1092.7,510.0 1084.0,497.2 1078.5,495.1 1070.9,494.0 1068.2,500.5 1065.4,490.7 1058.9,486.3 1054.5,484.2 1045.8,480.3 1040.3,479.8 1037.6,473.2 1036.0,475.4 1028.4,474.3 1021.3,477.6 1019.6,466.7 1008.2,462.3 1026.2,460.2 1026.2,455.8 1016.4,454.2 1014.7,447.6 1008.2,444.9 1009.3,437.3" fill="#24a6de" stroke="#fff" stroke-width="0.9" stroke-linejoin="round"/><polygon points="1122.2,371.4 1134.8,376.8 1140.2,373.5 1148.6,374.4 1150.4,378.6 1146.8,382.8 1151.6,390.0 1152.2,394.2 1160.6,393.0 1179.7,396.6 1187.5,400.4 1198.9,395.4 1209.7,390.6 1203.7,390.0 1200.7,385.8 1202.5,378.6 1208.5,373.2 1219.3,368.4 1239.7,363.0 1251.7,354.6 1263.7,367.8 1264.9,377.4 1264.9,402.6 1264.2,406.5 1254.3,415.3 1254.3,419.6 1246.7,431.6 1238.0,431.6 1229.3,436.0 1212.0,450.0 1194.1,450.5 1191.7,445.7 1187.0,442.1 1167.8,447.5 1163.0,444.5 1154.6,444.5 1148.6,442.1 1139.6,444.7 1136.6,437.3 1142.0,434.9 1136.6,433.1 1134.2,426.5 1136.6,419.3 1134.2,408.5 1133.0,397.8 1126.4,388.2 1125.8,379.8" fill="#24a6de" stroke="#fff" stroke-width="0.9" stroke-linejoin="round"/><polygon points="1295.4,295.7 1297.5,302.8 1298.9,310.6 1303.9,312.7 1306.7,317.0 1311.0,314.8 1318.1,313.4 1321.6,317.7 1322.3,326.9 1330.9,329.0 1336.5,331.1 1337.9,338.9 1353.5,338.9 1358.5,343.2 1355.7,348.2 1358.5,352.4 1356.4,358.1 1361.6,360.5 1358.4,373.6 1354.0,382.3 1347.4,394.3 1338.7,399.8 1338.7,415.1 1330.7,428.4 1320.9,421.8 1318.7,412.0 1299.0,413.1 1288.1,408.7 1277.2,408.7 1264.2,406.5 1265.4,401.0 1264.3,393.4 1265.4,376.0 1264.3,369.4 1251.4,353.1 1256.4,346.7 1262.1,348.2 1258.5,342.5 1259.2,307.7 1268.4,301.3 1288.3,297.1" fill="#a6def0" stroke="#fff" stroke-width="0.9" stroke-linejoin="round"/><polygon points="1361.6,360.5 1375.8,357.3 1382.3,349.6 1383.4,362.7 1384.5,369.3 1399.8,375.8 1408.5,384.5 1417.2,382.3 1430.3,386.7 1439.0,385.6 1450.0,388.9 1458.7,402.0 1465.2,399.8 1474.0,405.2 1484.9,402.0 1495.8,407.4 1515.4,410.7 1512.1,417.2 1504.5,430.3 1500.1,443.4 1497.9,454.3 1493.6,465.2 1494.7,482.7 1493.6,500.1 1485.9,504.5 1480.5,502.3 1474.0,487.0 1458.7,478.3 1439.0,473.9 1426.0,482.7 1419.4,491.4 1406.3,499.0 1395.4,493.6 1388.9,482.7 1378.0,475.0 1364.9,480.5 1349.6,479.4 1343.1,467.4 1336.5,458.7 1330.0,454.3 1329.6,443.6 1334.0,440.3 1331.8,439.3 1330.7,428.4 1338.7,415.1 1338.7,399.8 1347.4,394.3 1354.0,382.3 1358.4,373.6" fill="#a0d8f0" stroke="#fff" stroke-width="0.9" stroke-linejoin="round"/><polygon points="1229.3,436.0 1238.0,431.6 1246.7,431.6 1254.3,419.6 1257.6,426.2 1259.8,437.0 1266.3,448.0 1272.9,452.3 1275.1,458.9 1294.7,461.0 1299.0,469.8 1314.3,467.6 1318.7,477.4 1315.4,489.4 1310.0,513.4 1315.4,528.7 1317.3,532.7 1316.2,549.1 1305.3,552.3 1298.7,557.8 1296.5,564.3 1290.0,565.4 1285.4,566.5 1265.8,568.7 1250.5,573.1 1241.8,570.9 1238.0,561.4 1229.3,550.5 1222.7,539.6 1207.4,537.4 1198.7,530.9 1197.4,522.9 1199.6,514.2 1201.8,509.8 1212.7,490.2 1225.8,461.8 1233.6,452.3 1231.4,443.6" fill="#1279aa" stroke="#fff" stroke-width="0.9" stroke-linejoin="round"/><polygon points="1308.0,466.0 1315.4,462.2 1318.7,456.7 1327.4,453.4 1330.0,454.3 1336.5,458.7 1343.1,467.4 1349.6,479.4 1364.9,480.5 1378.0,475.0 1388.9,482.7 1395.4,493.6 1406.3,499.0 1419.4,491.4 1426.0,482.7 1439.0,473.9 1458.7,478.3 1474.0,487.0 1480.5,502.3 1477.6,500.0 1471.0,508.7 1464.5,526.2 1453.6,537.1 1453.6,545.8 1442.7,556.7 1440.5,567.6 1431.8,576.3 1425.2,574.2 1416.5,576.3 1403.4,563.2 1394.7,564.3 1388.1,582.9 1383.8,576.3 1372.9,577.4 1366.3,584.0 1353.2,581.8 1355.4,567.6 1346.7,563.2 1338.0,551.3 1327.1,553.4 1316.2,549.1 1317.3,532.7 1315.4,528.7 1310.0,513.4 1315.4,489.4 1318.7,477.4 1314.3,467.6" fill="#1290c8" stroke="#fff" stroke-width="0.9" stroke-linejoin="round"/><polygon points="1285.4,566.5 1290.0,565.4 1296.5,564.3 1298.7,557.8 1305.3,552.3 1316.2,549.1 1327.1,553.4 1338.0,551.3 1346.7,563.2 1355.4,567.6 1353.2,581.8 1366.3,584.0 1372.9,577.4 1383.8,576.3 1388.1,582.9 1394.7,564.3 1403.4,563.2 1416.5,576.3 1425.2,574.2 1431.8,576.3 1436.0,582.9 1442.7,580.7 1447.0,574.2 1451.4,569.8 1464.5,567.6 1471.0,574.2 1473.2,582.9 1479.7,593.8 1473.2,602.5 1477.6,611.2 1487.4,626.5 1485.9,633.3 1477.7,639.8 1467.9,642.3 1461.4,643.1 1458.1,646.4 1453.2,643.1 1449.9,648.0 1456.5,652.9 1456.5,657.8 1441.8,660.3 1435.2,666.0 1427.0,672.5 1425.4,680.7 1419.7,682.3 1419.7,688.9 1428.7,693.8 1429.5,702.0 1422.1,703.6 1417.2,698.7 1407.4,697.0 1404.2,693.8 1400.9,687.2 1396.0,688.9 1394.3,694.6 1391.1,693.0 1386.2,693.8 1384.7,694.4 1371.0,693.4 1361.1,691.4 1355.3,676.7 1347.4,663.9 1342.3,662.5 1331.4,657.0 1322.0,660.0 1316.0,674.0 1306.2,660.0 1296.3,673.7 1282.6,675.7 1278.8,656.0 1283.2,642.9 1289.7,632.0 1295.2,627.6 1294.1,614.5 1291.9,605.8 1299.6,597.1 1298.5,586.2 1291.9,577.4" fill="#4eb1ca" stroke="#fff" stroke-width="0.9" stroke-linejoin="round"/><polygon points="1386.2,693.8 1391.1,693.0 1394.3,694.6 1396.0,688.9 1400.9,687.2 1404.2,693.8 1407.4,697.0 1417.2,698.7 1422.1,703.6 1429.5,702.0 1428.7,693.8 1419.7,688.9 1419.7,682.3 1425.4,680.7 1427.0,672.5 1435.2,666.0 1441.8,660.3 1456.5,657.8 1456.5,652.9 1449.9,648.0 1453.2,643.1 1458.1,646.4 1461.4,643.1 1467.1,643.1 1471.2,649.6 1472.8,656.2 1482.6,659.4 1485.9,666.0 1478.6,677.4 1481.0,682.3 1481.0,685.6 1484.3,692.1 1489.2,693.8 1499.0,699.5 1513.7,696.2 1515.4,703.6 1510.4,708.5 1508.8,713.4 1505.5,723.2 1492.5,728.1 1485.9,741.2 1476.1,744.5 1474.5,756.7 1461.4,760.8 1451.6,763.3 1438.5,766.5 1432.0,760.8 1418.9,757.6 1417.2,751.0 1402.5,750.2 1397.6,746.1 1394.3,751.0 1384.5,749.4 1384.5,744.5 1371.4,742.8 1378.0,736.3 1378.8,731.4 1384.5,729.8 1387.8,719.9 1396.0,713.4 1389.4,700.3" fill="#7ecff2" stroke="#fff" stroke-width="0.9" stroke-linejoin="round"/><polygon points="1254.3,415.3 1264.2,406.5 1277.2,408.7 1288.1,408.7 1299.0,413.1 1318.7,412.0 1320.9,421.8 1330.7,428.4 1331.8,439.3 1334.0,440.3 1329.6,443.6 1327.4,453.4 1318.7,456.7 1315.4,462.2 1299.0,469.8 1294.7,461.0 1275.1,458.9 1272.9,452.3 1266.3,448.0 1259.8,437.0 1257.6,426.2 1254.3,419.6" fill="#1b1b57" stroke="#fff" stroke-width="0.9" stroke-linejoin="round"/><polygon points="1128.3,577.3 1131.6,577.3 1132.9,579.6 1138.8,581.6 1138.8,583.2 1136.2,582.6 1131.6,580.3 1129.0,579.3" fill="#a8dff0"/><polygon points="1134.2,590.1 1138.1,594.0 1140.8,599.3 1140.8,601.9 1138.8,601.9 1134.9,596.6 1134.2,594.0" fill="#a8dff0"/><polygon points="1013.1,447.1 1024.5,441.1 1025.3,442.2 1020.7,446.5 1028.9,448.2 1028.9,449.5 1014.7,448.9" fill="#fff"/><polygon points="1142.5,614.5 1149.0,617.0 1157.0,626.0 1161.0,638.0 1162.4,647.5 1160.0,646.0 1155.0,634.0 1148.0,624.0 1141.5,619.0" fill="#fff"/><polygon points="1138.5,672.0 1141.0,666.0 1147.0,672.0" fill="#fff"/><polygon points="1588.9,761.5 1591.8,763.7 1594.0,771.6 1594.7,783.1 1597.5,788.9 1598.3,800.4 1600.4,807.6 1599.7,817.7 1596.1,824.9 1596.1,836.4 1594.7,847.9 1590.3,853.7 1589.6,858.7 1584.6,856.5 1570.2,849.3 1571.6,843.6 1565.2,839.3 1568.8,832.1 1561.6,828.5 1564.4,820.5 1558.7,813.3 1560.1,807.6 1555.8,802.5 1560.1,794.6 1564.4,787.4 1576.0,783.1 1578.8,779.5 1586.0,780.2 1588.2,771.6 1587.5,764.4" fill="#0a4a71"/><polygon points="1465.1,802.5 1480.9,804.7 1486.7,807.6 1489.6,814.8 1498.2,824.9 1501.8,829.2 1499.6,836.4 1498.9,846.5 1489.6,849.3 1482.4,850.0 1472.3,847.9 1460.8,842.1 1453.6,835.0 1451.4,824.9 1446.4,817.7 1452.1,813.3 1452.9,807.6" fill="#6e6e6e"/><polygon points="1374.4,804.7 1378.7,810.5 1388.8,811.9 1391.7,814.8 1387.4,823.4 1390.2,830.6 1383.8,836.4 1387.4,843.6 1381.6,844.3 1374.4,839.3 1374.4,833.5 1380.2,833.5 1377.3,822.0 1370.1,813.3 1371.5,807.6" fill="#6e6e6e"/><polygon points="1012.3,574.5 1019.1,574.5 1030.0,582.7 1031.3,601.8 1025.9,608.6 1019.1,608.6 1015.0,599.0 1010.9,582.7" fill="#6e6e6e"/><polygon points="1038.1,560.9 1043.6,565.0 1043.6,573.2 1057.2,578.6 1058.6,582.2 1042.2,585.4 1034.1,585.4 1032.7,575.9 1036.8,569.1 1034.1,565.0" fill="#6e6e6e"/><polygon points="1018.5,637.0 1030.0,635.8 1040.9,644.0 1049.0,653.5 1057.2,648.1 1054.5,659.0 1061.3,664.4 1065.4,675.3 1066.8,684.9 1062.7,693.0 1058.6,690.3 1058.6,684.9 1038.1,684.9 1034.1,678.1 1043.6,675.3 1041.5,668.5 1034.0,664.0 1025.0,657.0 1019.5,649.0 1017.5,642.0" fill="#6e6e6e"/><polygon points="1034.1,728.5 1049.0,731.2 1062.7,740.7 1072.2,750.3 1070.8,758.4 1062.7,768.0 1057.2,784.3 1035.4,787.1 1025.9,787.1 1032.7,773.4 1027.2,757.1 1025.9,740.7" fill="#6e6e6e"/><circle cx="1055.9" cy="610.5" r="4.5" fill="#6e6e6e"/><path d="M1070.5 579L1079 574.5" stroke="#888" stroke-width="1.3"/><path d="M1398 815l2 3-1.5 2z" fill="#6e6e6e"/><rect x="1084.5" y="452" width="229.5" height="59.7" fill="rgba(104,108,111,0.93)"/><path d="M1304 423.5c1.6 0 2.2 1 2.2 2.2v7.3c.4-1 2.4-1.2 2.8.3.6-1 2.5-1 2.8.6.6-.8 2.4-.6 2.4 1.2v5.5c0 2.5-1.4 4.7-3 5.6h-7c-1.2-1-4.5-5.5-5.5-7-1-1.5.7-2.8 2-1.6l1.5 1.7v-13.6c0-1.2.8-2.2 1.8-2.2z" fill="#fff" stroke="#000" stroke-width="1"/><path d="M1306.2 433v5M1309 433.3v4.7M1311.8 434v4" stroke="#000" stroke-width="0.8"/></svg><div class="t" style="left:1091.2px;top:461.09px;font-size:13.6px;color:#fff;font-weight:normal;">Île-de-France</div><div class="t" style="left:1091.2px;top:477.49px;font-size:13.6px;color:#fff;font-weight:normal;">Population municipale: 12 174 880</div><div class="t" style="left:1091.2px;top:493.99px;font-size:13.6px;color:#fff;font-weight:normal;">Population comptée à part: 116 399</div>
<svg class="b" style="left:1544px;top:245px" width="19" height="19" viewBox="0 0 19 19"><path d="M9.63 1.63A7.2 7.2 0 0 0 4.37 14.3M8.37 15.97A7.2 7.2 0 0 0 13.63 3.28" fill="none" stroke="#6a6a6a" stroke-width="2.1"/><path d="M1 16.4H5.9L5.5 11.8Z" fill="#6a6a6a"/><path d="M12 1.2H17L12.3 5.8Z" fill="#6a6a6a"/></svg>
<svg class="b" style="left:1572px;top:252px" width="8" height="5" viewBox="0 0 8 5"><path d="M0 0H7.5L3.75 4.5Z" fill="#6a6a6a"/></svg>
<svg class="b" style="left:1593px;top:245px" width="19" height="18" viewBox="0 0 19 18"><path d="M6 3.5H11A5.5 5.5 0 0 1 11 14.5H9" fill="none" stroke="#6a6a6a" stroke-width="3.2"/><path d="M0 3.5L7 -1V8Z" fill="#6a6a6a"/></svg>
<svg class="b" style="left:1626px;top:245px" width="19" height="18" viewBox="0 0 19 18"><path d="M13 3.5H8A5.5 5.5 0 0 0 8 14.5H10" fill="none" stroke="#d4d4d4" stroke-width="3.2"/><path d="M19 3.5L12 -1V8Z" fill="#d4d4d4"/></svg>
<svg class="b" style="left:1660px;top:247px" width="20" height="15" viewBox="0 0 20 15"><rect x="1" y="1" width="18" height="13" fill="none" stroke="#6a6a6a" stroke-width="1.6"/><path d="M4 8V11H7Z M16 7V4H13Z" fill="#6a6a6a" stroke="#6a6a6a" stroke-width="1"/></svg>
<svg class="b" style="left:1695px;top:244px" width="18" height="19" viewBox="0 0 18 19"><path d="M0 2.5C0 0 18 0 18 2.5L10.5 11V19L7.5 16V11Z" fill="#6a6a6a"/><ellipse cx="9" cy="2.3" rx="7" ry="1.2" fill="#8a8a8a"/></svg>
<svg class="b" style="left:1729px;top:246px" width="17" height="16" viewBox="0 0 17 16"><rect x="0" y="9" width="4" height="6.5" rx="2" fill="#6a6a6a"/><rect x="6.5" y="5" width="4" height="10.5" rx="2" fill="#6a6a6a"/><rect x="13" y="0" width="4" height="15.5" rx="2" fill="#6a6a6a"/></svg>
<svg class="b" style="left:1757px;top:252px" width="8" height="5" viewBox="0 0 8 5"><path d="M0 0H7.5L3.75 4.5Z" fill="#6a6a6a"/></svg>
<svg class="b" style="left:1781px;top:245px" width="7" height="19" viewBox="0 0 7 19"><circle cx="3.4" cy="2.8" r="2.6" fill="#6a6a6a"/><circle cx="3.4" cy="9.5" r="2.6" fill="#6a6a6a"/><circle cx="3.4" cy="16.2" r="2.6" fill="#6a6a6a"/></svg>
<svg class="b" style="left:810px;top:270px" width="16" height="15" viewBox="0 0 16 15"><path d="M8 0L16 7.5H13.5V15H9.8V10.5H6.2V15H2.5V7.5H0Z" fill="#f39a12"/></svg>
<div class="t" style="left:833px;top:273.32px;font-size:11.2px;color:#e9781a;font-weight:normal;">Géographique</div>
<svg class="b" style="left:909px;top:272px" width="6" height="12" viewBox="0 0 6 12"><path d="M1 0.5L5 6L1 11.5" fill="none" stroke="#999" stroke-width="1"/></svg>
<div class="t" style="left:924.8px;top:273.66px;font-size:10.8px;color:#707070;font-weight:normal;">Région</div>
<div class="b" style="left:1711px;top:304px;width:88px;height:49px;background:#f5f5f5;border:1px solid #e6e6e6;box-sizing:border-box"></div>
<div class="t" style="left:1734.8px;top:308.99px;font-size:13.6px;color:#5f5f5f;font-weight:normal;">autres:</div>
<svg class="b" style="left:1717.5px;top:326.5px" width="13" height="17.5" viewBox="0 0 13 17.5"><path d="M6.5 16.5C3 11.5 0.8 8.7 0.8 6.2A5.7 5.7 0 0 1 12.2 6.2C12.2 8.7 10 11.5 6.5 16.5Z" fill="#2eaa36"/><circle cx="6.5" cy="6" r="3.5" fill="#fff"/><path d="M4.6 6H8M6.6 4.5L8.2 6L6.6 7.5" stroke="#2eaa36" stroke-width="1.3" fill="none"/></svg>
<div class="t" style="left:1734px;top:330.74px;font-size:13.3px;color:#5f5f5f;font-weight:normal;">1 885 206</div>
<div class="b" style="left:1522px;top:883px;width:91px;height:32px;border:1.3px solid #17a0db;border-radius:6px;box-sizing:border-box"></div>
<div class="t" style="left:1267.5px;width:600px;text-align:center;top:892.55px;font-size:14px;color:#17a0db;font-weight:normal;">Appliquer</div>
<div class="b" style="left:1619px;top:883px;width:89px;height:32px;background:#17a0db;border-radius:6px"></div>
<div class="t" style="left:1363.5px;width:600px;text-align:center;top:892.55px;font-size:14px;color:#fff;font-weight:normal;">OK</div>
<div class="b" style="left:1714px;top:883px;width:89px;height:32px;border:1.3px solid #17a0db;border-radius:6px;box-sizing:border-box"></div>
<div class="t" style="left:1458.5px;width:600px;text-align:center;top:892.55px;font-size:14px;color:#17a0db;font-weight:normal;">Annuler</div>
</body></html>
